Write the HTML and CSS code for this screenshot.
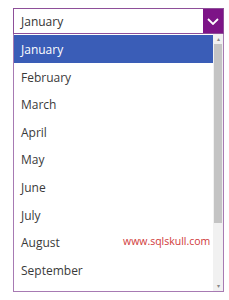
FILE: index.html
```html
<!DOCTYPE html>
<html lang="en">
<head>
    <meta charset="UTF-8">
    <title>Month dropdown</title>
    <link rel="stylesheet" href="styles.css">
</head>
<body>
    <div class="dropdown">
        <div class="select-box">
            <span class="select-value">January</span>
            <div class="chevron-btn">
                <svg width="12" height="7" viewBox="0 0 12 7"><path d="M1 1 L6 6 L11 1" fill="none" stroke="#fff" stroke-width="1.8"/></svg>
            </div>
        </div>
        <div class="list">
            <div class="items">
                <div class="item selected">January</div>
                <div class="item">February</div>
                <div class="item">March</div>
                <div class="item">April</div>
                <div class="item">May</div>
                <div class="item">June</div>
                <div class="item">July</div>
                <div class="item">August</div>
                <div class="item">September</div>
            </div>
            <div class="scrollbar">
                <div class="arrow">&#9652;</div>
                <div class="track"><div class="thumb"></div></div>
                <div class="arrow">&#9662;</div>
            </div>
            <div class="watermark">www.sqlskull.com</div>
        </div>
    </div>
</body>
</html>
```

FILE: styles.css
```css
body {
    margin: 0;
    background: #fff;
    font-family: "Open Sans", "Noto Sans", sans-serif;
}
.dropdown {
    margin: 8px 0 0 13px;
    width: 211px;
}
.select-box {
    display: flex;
    height: 26px;
    border: 1px solid #8e4f99;
    box-sizing: border-box;
}
.select-value {
    flex: 1;
    padding: 1px 0 0 7px;
    font-size: 12px;
    line-height: 24px;
    color: #333;
}
.chevron-btn {
    width: 20px;
    background: #7d1487;
    display: flex;
    align-items: center;
    justify-content: center;
}
.list {
    position: relative;
    display: flex;
    height: 258px;
    border: 1px solid #a77ab3;
    border-top: none;
    box-sizing: border-box;
    overflow: hidden;
}
.items {
    flex: 1;
    padding-top: 1px;
}
.item {
    height: 27.6px;
    line-height: 27.6px;
    padding: 1px 0 0 7px;
    box-sizing: border-box;
    font-size: 12px;
    color: #3a3a3a;
}
.item.selected {
    background: #3a5db7;
    color: #fff;
}
.scrollbar {
    width: 10px;
    background: #f1f1f1;
    display: flex;
    flex-direction: column;
}
.arrow {
    height: 10px;
    font-size: 6px;
    line-height: 10px;
    text-align: center;
    color: #888;
}
.track {
    flex: 1;
    padding: 0 1px;
}
.thumb {
    height: 179px;
    background: #c4c4c4;
}
.watermark {
    position: absolute;
    left: 109px;
    top: 200px;
    font-size: 10.5px;
    color: #d03a3a;
}
```
